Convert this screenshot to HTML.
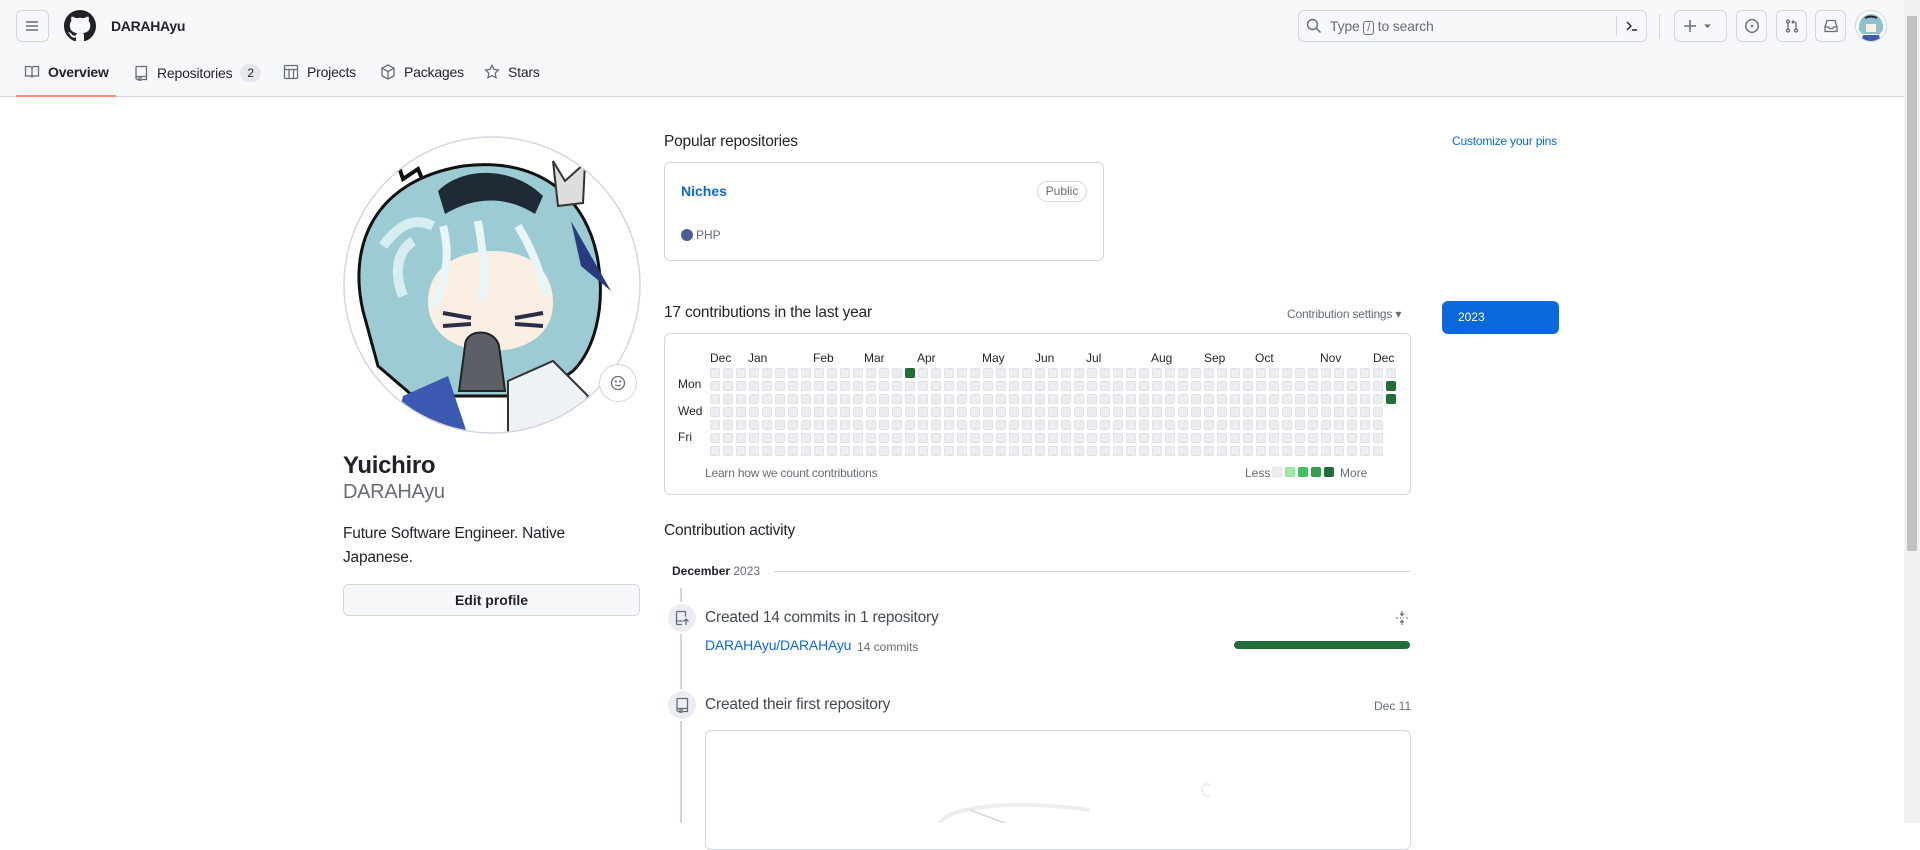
<!DOCTYPE html>
<html><head><meta charset="utf-8">
<style>
*{box-sizing:border-box;margin:0;padding:0}
body{width:1920px;height:823px;overflow:hidden;background:#fff;font-family:"Liberation Sans",sans-serif;color:#1f2328;position:relative}
.abs{position:absolute}
.hdr{position:absolute;left:0;top:0;width:1904px;height:97px;background:#f6f8fa;border-bottom:1px solid #d0d7de}
.btn{position:absolute;border:1px solid #d0d7de;border-radius:6px;background:#f6f8fa}
.tab{position:absolute;top:64px;font-size:14px;color:#1f2328;display:flex;align-items:center;gap:8px;letter-spacing:-0.2px}
.tab svg{fill:none;stroke:#656d76;stroke-width:1.3}
.sb{position:absolute;left:1904px;top:0;width:16px;height:823px;background:#f1f1f1}
.sb div{position:absolute;left:3px;top:16px;width:10px;height:535px;background:#c1c1c1}
.cell{position:absolute;width:10px;height:10px;border-radius:2px;background:#ebedf0;outline:1px solid rgba(27,31,35,0.05);outline-offset:-1px}
.muted{color:#656d76}
a{color:#0969da;text-decoration:none}
.t16{font-size:15.5px;letter-spacing:-0.2px}
</style></head><body>
<div class="hdr"></div>
<div class="btn" style="left:16px;top:10px;width:33px;height:32px"></div>
<svg class="abs" style="left:24px;top:18px" width="16" height="16" viewBox="0 0 16 16"><path d="M2 4h12M2 8h12M2 12h12" stroke="#656d76" stroke-width="1.4"/></svg>
<svg class="abs" style="left:64px;top:10px" width="32" height="32" viewBox="0 0 16 16"><path fill="#1f2328" d="M8 0C3.58 0 0 3.58 0 8c0 3.54 2.29 6.53 5.47 7.590.4.07.55-.17.55-.38 0-.19-.01-.82-.01-1.49-2.01.37-2.530-.49-2.690-.94-.09-.23-.48-.94-.82-1.13-.28-.15-.68-.52-.01-.53.63-.01 1.08.58 1.23.82.72 1.21 1.87.87 2.33.66.07-.52.28-.87.51-1.070-1.78-.2-3.64-.89-3.64-3.95 0-.87.31-1.59.82-2.15-.08-.2-.36-1.02.08-2.12 0 0 .67-.21 2.2.82.64-.18 1.32-.27 2-.27.68 0 1.36.09 2 .27 1.53-1.04 2.2-.82 2.2-.82.44 1.1.16 1.92.08 2.12.51.56.82 1.27.82 2.15 0 3.07-1.87 3.75-3.65 3.95.29.25.54.73.54 1.48 0 1.07-.01 1.93-.01 2.2 0 .21.15.46.55.38A8.013 8.013 0 0016 8c0-4.42-3.58-8-8-8z"/></svg>
<div class="abs" style="left:111px;top:18px;font-size:14px;font-weight:bold;letter-spacing:-0.3px">DARAHAyu</div>

<div class="tab" style="left:24px"><svg width="16" height="16" viewBox="0 0 16 16"><path d="M1.5 2.5h4.5a2 2 0 012 2v9a1.5 1.5 0 00-1.5-1.5h-5zM14.5 2.5H10a2 2 0 00-2 2v9a1.5 1.5 0 011.5-1.5h5z"/></svg><span style="font-weight:600">Overview</span></div>
<div class="abs" style="left:16px;top:95px;width:100px;height:2px;background:#fd8c73"></div>
<div class="tab" style="left:133px"><svg width="16" height="16" viewBox="0 0 16 16"><path d="M3 13V2.5A1 1 0 014 1.5h9.5v10H4.5A1.5 1.5 0 003 13a1.5 1.5 0 001.5 1.5H6M9 14.5h4.5v-3M6 12v3.5l1-.8 1 .8V12"/></svg><span>Repositories</span><span style="background:#e5e8eb;border-radius:10px;padding:2px 7px;font-size:12px">2</span></div>
<div class="tab" style="left:283px"><svg width="16" height="16" viewBox="0 0 16 16"><rect x="1.5" y="1.5" width="13" height="13" rx="1"/><path d="M1.5 5.5h13M6 5.5v9M10.5 5.5v9"/></svg><span>Projects</span></div>
<div class="tab" style="left:380px"><svg width="16" height="16" viewBox="0 0 16 16"><path d="M8 1l6 3.2v7.6L8 15l-6-3.2V4.2zM2 4.2L8 7.5l6-3.3M8 7.5V15"/></svg><span>Packages</span></div>
<div class="tab" style="left:484px"><svg width="16" height="16" viewBox="0 0 16 16"><path d="M8 1.3l2 4.1 4.5.6-3.3 3.2.8 4.5L8 11.6l-4 2.1.8-4.5L1.5 6l4.5-.6z"/></svg><span>Stars</span></div>

<div class="btn" style="left:1298px;top:10px;width:349px;height:32px;background:#fff0"></div>
<svg class="abs" style="left:1306px;top:18px" width="16" height="16" viewBox="0 0 16 16"><circle cx="6.5" cy="6.5" r="5" fill="none" stroke="#656d76" stroke-width="1.4"/><path d="M10.2 10.2L14.5 14.5" stroke="#656d76" stroke-width="1.5"/></svg>
<div class="abs muted" style="left:1330px;top:18px;font-size:14px;letter-spacing:-0.2px">Type <span style="border:1px solid #656d76;border-radius:3px;padding:0 3px;font-size:11px">/</span> to search</div>
<div class="abs" style="left:1616px;top:16px;width:1px;height:20px;background:#d0d7de"></div>
<svg class="abs" style="left:1624px;top:18px" width="16" height="16" viewBox="0 0 16 16"><path d="M3 4l4 4-4 4M8 12h5" fill="none" stroke="#1f2328" stroke-width="1.4"/></svg>
<div class="abs" style="left:1659px;top:14px;width:1px;height:24px;background:#d0d7de"></div>
<div class="btn" style="left:1674px;top:10px;width:53px;height:32px"></div>
<svg class="abs" style="left:1682px;top:18px" width="40" height="16" viewBox="0 0 40 16"><path d="M8 2v12M2 8h12" stroke="#656d76" stroke-width="1.5"/><path d="M22 6.5h7l-3.5 3.5z" fill="#656d76"/></svg>
<div class="btn" style="left:1736px;top:10px;width:31px;height:32px"></div>
<svg class="abs" style="left:1744px;top:18px" width="16" height="16" viewBox="0 0 16 16"><circle cx="8" cy="8" r="6.3" fill="none" stroke="#656d76" stroke-width="1.4"/><circle cx="8" cy="8" r="1.3" fill="#656d76"/></svg>
<div class="btn" style="left:1776px;top:10px;width:31px;height:32px"></div>
<svg class="abs" style="left:1784px;top:18px" width="16" height="16" viewBox="0 0 16 16" fill="none" stroke="#656d76" stroke-width="1.3"><circle cx="4" cy="3.5" r="1.5"/><circle cx="4" cy="12.5" r="1.5"/><circle cx="12" cy="12.5" r="1.5"/><path d="M4 5v6M12 11V5.5a1.5 1.5 0 00-1.5-1.5H8M9.5 2.5L8 4l1.5 1.5"/></svg>
<div class="btn" style="left:1815px;top:10px;width:31px;height:32px"></div>
<svg class="abs" style="left:1823px;top:18px" width="16" height="16" viewBox="0 0 16 16" fill="none" stroke="#656d76" stroke-width="1.3"><path d="M2 9l2-6.5h8L14 9v4.5H2zM2 9h3.5l1 1.5h3l1-1.5H14"/></svg>
<svg class="abs" style="left:1855px;top:10px" width="32" height="32" viewBox="0 0 32 32"><defs><clipPath id="c2"><circle cx="16" cy="16" r="15"/></clipPath></defs><circle cx="16" cy="16" r="15.5" fill="#fff" stroke="#d0d7de"/><g clip-path="url(#c2)"><path d="M4 20C3 10 9 4 16 4s13 6 12 16l-3 4H7z" fill="#8fc1cc"/><path d="M10 8c4-2 8-2 12 0" stroke="#1d2835" stroke-width="2" fill="none"/><rect x="11" y="14" width="10" height="8" fill="#fbeee3"/><path d="M8 25h16l2 8H6z" fill="#3f5caa"/></g></svg>

<!-- avatar -->
<svg class="abs" style="left:343px;top:136px" width="298" height="298" viewBox="0 0 298 298">
<defs><clipPath id="c"><circle cx="149" cy="149" r="148"/></clipPath></defs>
<circle cx="149" cy="149" r="148" fill="#fff"/>
<g clip-path="url(#c)">
<path d="M40 40l15-12 5 15 15-10 5 12" stroke="#111" stroke-width="4" fill="none"/>
<path d="M20 175C5 110 30 45 120 30c80-10 125 35 135 95 8 50-5 90-25 110l-35 25H70L35 230z" fill="#9ccbd3" stroke="#111" stroke-width="3"/>
<path d="M95 55c25-25 75-25 105 5l-8 18c-28-18-60-18-90 0z" fill="#1e2a36"/>
<path d="M40 110c15-20 30-30 50-20M60 160c-10-25-5-45 10-55" stroke="#d6eef2" stroke-width="10" fill="none"/>
<path d="M85 165c0-30 25-50 65-50s60 22 60 52c0 30-25 48-62 48s-63-18-63-50z" fill="#fbeee3"/>
<path d="M100 90c8 30 2 60-10 80M135 85c5 30 8 55 3 80M175 90c15 25 22 45 28 70" stroke="#e8f6f8" stroke-width="8" fill="none"/>
<path d="M100 177l28 5M100 190l28-2M172 182l28-5M172 188l28 2" stroke="#2a2f45" stroke-width="4"/>
<path d="M122 210c0-18 30-18 34 0l6 45h-46z" fill="#5c5f66" stroke="#222" stroke-width="2"/>
<path d="M60 260l45-20 20 60H50z" fill="#3b59b0"/>
<path d="M165 245l45-20 35 35-15 40h-65z" fill="#eef2f6" stroke="#333" stroke-width="2"/>
<path d="M210 25l12 20 20-18-2 40-25 3z" fill="#ddd" stroke="#333" stroke-width="2"/>
<path d="M228 85l40 70-30-25z" fill="#283a80"/>
</g>
<circle cx="149" cy="149" r="148" fill="none" stroke="#d0d7de" stroke-width="1.5"/>
</svg>
<div class="abs" style="left:599px;top:364px;width:38px;height:38px;border-radius:50%;background:#fff;border:1px solid #d0d7de"></div>
<svg class="abs" style="left:610px;top:375px" width="16" height="16" viewBox="0 0 16 16" fill="none" stroke="#656d76" stroke-width="1.3"><circle cx="8" cy="8" r="6.5"/><circle cx="5.8" cy="6.5" r=".5" fill="#656d76"/><circle cx="10.2" cy="6.5" r=".5" fill="#656d76"/><path d="M5.3 9.7c1.4 1.6 4 1.6 5.4 0"/></svg>

<div class="abs" style="left:343px;top:452px;font-size:24px;font-weight:600;letter-spacing:-0.3px">Yuichiro</div>
<div class="abs" style="left:343px;top:481px;font-size:20px;color:#656d76;font-weight:300;letter-spacing:-0.3px">DARAHAyu</div>
<div class="abs t16" style="left:343px;top:522px;line-height:24px;width:280px">Future Software Engineer. Native Japanese.</div>
<div class="btn" style="left:343px;top:584px;width:297px;height:32px;font-size:14px;font-weight:600;text-align:center;line-height:30px">Edit profile</div>

<!-- main -->
<div class="abs t16" style="left:664px;top:133px">Popular repositories</div>
<a class="abs" style="left:1452px;top:134px;font-size:12px;letter-spacing:-0.2px">Customize your pins</a>
<div class="abs" style="left:664px;top:162px;width:440px;height:99px;border:1px solid #d0d7de;border-radius:6px"></div>
<a class="abs" style="left:681px;top:183px;font-size:14px;font-weight:600">Niches</a>
<div class="abs muted" style="left:1037px;top:181px;width:50px;height:21px;border:1px solid #d0d7de;border-radius:11px;font-size:12px;text-align:center;line-height:19px">Public</div>
<div class="abs" style="left:681px;top:229px;width:12px;height:12px;border-radius:50%;background:#4f5d95"></div>
<div class="abs muted" style="left:696px;top:228px;font-size:12px">PHP</div>

<div class="abs t16" style="left:664px;top:304px">17 contributions in the last year</div>
<div class="abs muted" style="left:1287px;top:307px;font-size:12px;letter-spacing:-0.2px">Contribution settings ▾</div>
<div class="abs" style="left:1442px;top:301px;width:117px;height:33px;background:#0969da;border-radius:6px;color:#fff;font-size:12px;line-height:33px;padding-left:16px">2023</div>
<div class="abs" style="left:664px;top:333px;width:747px;height:162px;border:1px solid #d0d7de;border-radius:6px"></div>
<div id="cal"></div>
<div class="abs" style="left:678px;top:377px;font-size:12px">Mon</div>
<div class="abs" style="left:678px;top:404px;font-size:12px">Wed</div>
<div class="abs" style="left:678px;top:430px;font-size:12px">Fri</div>
<div class="abs muted" style="left:705px;top:466px;font-size:12px;letter-spacing:-0.2px">Learn how we count contributions</div>
<div class="abs muted" style="left:1245px;top:466px;font-size:12px">Less</div>
<div class="cell" style="left:1272px;top:467px"></div>
<div class="cell" style="left:1285px;top:467px;background:#9be9a8"></div>
<div class="cell" style="left:1298px;top:467px;background:#40c463"></div>
<div class="cell" style="left:1311px;top:467px;background:#30a14e"></div>
<div class="cell" style="left:1324px;top:467px;background:#216e39"></div>
<div class="abs muted" style="left:1340px;top:466px;font-size:12px">More</div>

<div class="abs t16" style="left:664px;top:522px">Contribution activity</div>
<div class="abs" style="left:672px;top:564px;font-size:12px;font-weight:600">December <span class="muted" style="font-weight:400">2023</span></div>
<div class="abs" style="left:774px;top:571px;width:636px;height:1px;background:#d0d7de"></div>
<div class="abs" style="left:680px;top:588px;width:2px;height:235px;background:#d0d7de"></div>
<div class="abs" style="left:666px;top:602px;width:32px;height:32px;border-radius:50%;background:#eaeef2;border:2px solid #fff"></div>
<svg class="abs" style="left:674px;top:610px" width="16" height="16" viewBox="0 0 16 16" fill="none" stroke="#656d76" stroke-width="1.3"><path d="M8 14.5H3.5a1 1 0 01-1-1V2.5a1 1 0 011-1h8v5M2.5 11h6M12 15V9M9.5 11.5L12 9l2.5 2.5"/></svg>
<div class="abs t16" style="left:705px;top:609px;color:#424a53">Created 14 commits in 1 repository</div>
<svg class="abs" style="left:1394px;top:610px" width="16" height="16" viewBox="0 0 16 16"><path d="M8 1v4M6 3.5L8 5.5l2-2M8 15v-4M6 12.5L8 10.5l2 2" stroke="#656d76" fill="none" stroke-width="1.2"/><path d="M2 8h2M6 8h1M9 8h1M12 8h2" stroke="#656d76" stroke-width="1"/></svg>
<a class="abs" style="left:705px;top:637px;font-size:14px;letter-spacing:-0.2px">DARAHAyu/DARAHAyu</a>
<div class="abs muted" style="left:857px;top:640px;font-size:12px">14 commits</div>
<div class="abs" style="left:1234px;top:641px;width:176px;height:8px;border-radius:4px;background:#216e39"></div>

<div class="abs" style="left:666px;top:689px;width:32px;height:32px;border-radius:50%;background:#eaeef2;border:2px solid #fff"></div>
<svg class="abs" style="left:674px;top:697px" width="16" height="16" viewBox="0 0 16 16" fill="none" stroke="#656d76" stroke-width="1.3"><path d="M3 13V2.5A1 1 0 014 1.5h9.5v10H4.5A1.5 1.5 0 003 13a1.5 1.5 0 001.5 1.5H6M9 14.5h4.5v-3M6 12v3.5l1-.8 1 .8V12"/></svg>
<div class="abs t16" style="left:705px;top:696px;color:#424a53">Created their first repository</div>
<div class="abs muted" style="left:1374px;top:699px;font-size:12px">Dec 11</div>
<div class="abs" style="left:705px;top:730px;width:706px;height:120px;border:1px solid #d0d7de;border-radius:6px"></div>
<svg class="abs" style="left:930px;top:780px" width="280" height="43" viewBox="0 0 280 43"><path d="M10 43C20 25 90 20 160 30" stroke="#eee" stroke-width="4" fill="none"/><path d="M40 30l40 15" stroke="#ddd" stroke-width="2"/><ellipse cx="277" cy="10" rx="5" ry="6" fill="none" stroke="#eee" stroke-width="2"/></svg>

<div class="sb"><div></div></div>
<script>
var h='',m=[["Dec",710],["Jan",748],["Feb",813],["Mar",864],["Apr",917],["May",982],["Jun",1035],["Jul",1086],["Aug",1151],["Sep",1204],["Oct",1255],["Nov",1320],["Dec",1373]];
m.forEach(function(a){h+='<div class="abs" style="left:'+a[1]+'px;top:351px;font-size:12px">'+a[0]+'</div>'});
for(var c=0;c<53;c++)for(var r=0;r<7;r++){if(c==52&&r>2)continue;var g=(c==15&&r==0)||(c==52&&r>0);h+='<div class="cell" style="left:'+(710+c*13)+'px;top:'+(368+r*13)+'px'+(g?';background:#216e39':'')+'"></div>';}
document.getElementById('cal').innerHTML=h;
</script>
</body></html>
